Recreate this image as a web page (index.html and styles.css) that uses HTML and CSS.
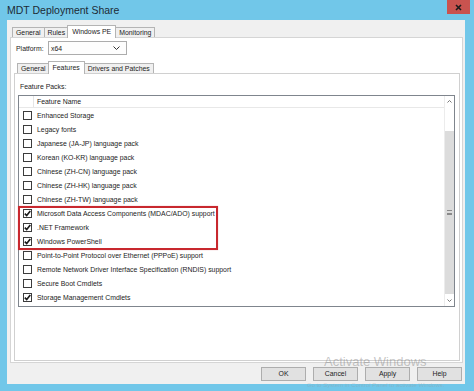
FILE: index.html
```html
<!DOCTYPE html>
<html>
<head>
<meta charset="utf-8">
<link rel="stylesheet" href="styles.css">
</head>
<body>
<div class="window">
  <div class="titlebar">
    <span class="title">MDT Deployment Share</span>
    <div class="close"><svg width="7" height="7" viewBox="0 0 7 7"><path d="M1 1L6 6M6 1L1 6" stroke="#1a1a1a" stroke-width="1.6"/></svg></div>
  </div>
  <div class="client">
    <div class="tabs outer-tabs">
      <div class="tab">General</div>
      <div class="tab">Rules</div>
      <div class="tab active">Windows PE</div>
      <div class="tab">Monitoring</div>
    </div>
    <div class="panel outer-panel">
      <div class="platform-row">
        <span class="platform-label">Platform:</span>
        <div class="select"><span>x64</span><svg width="7" height="4" viewBox="0 0 7 4"><path d="M0.5 0.5L3.5 3.5L6.5 0.5" fill="none" stroke="#333" stroke-width="1"/></svg></div>
      </div>
      <div class="tabs inner-tabs">
        <div class="tab">General</div>
        <div class="tab active">Features</div>
        <div class="tab">Drivers and Patches</div>
      </div>
      <div class="panel inner-panel">
        <div class="packs-label">Feature Packs:</div>
        <div class="listbox">
          <div class="list">
            <div class="list-header"><div class="hcol-check"></div><div class="hcol-name">Feature Name</div></div>
            <div class="row"><span class="cb"></span><span>Enhanced Storage</span></div>
            <div class="row"><span class="cb"></span><span>Legacy fonts</span></div>
            <div class="row"><span class="cb"></span><span>Japanese (JA-JP) language pack</span></div>
            <div class="row"><span class="cb"></span><span>Korean (KO-KR) language pack</span></div>
            <div class="row"><span class="cb"></span><span>Chinese (ZH-CN) language pack</span></div>
            <div class="row"><span class="cb"></span><span>Chinese (ZH-HK) language pack</span></div>
            <div class="row"><span class="cb"></span><span>Chinese (ZH-TW) language pack</span></div>
            <div class="row"><span class="cb"><svg width="7" height="7" viewBox="0 0 7 7"><path d="M0.8 3.6L2.7 5.6L6.3 1" fill="none" stroke="#1a1a1a" stroke-width="1.6"/></svg></span><span>Microsoft Data Access Components (MDAC/ADO) support</span></div>
            <div class="row"><span class="cb"><svg width="7" height="7" viewBox="0 0 7 7"><path d="M0.8 3.6L2.7 5.6L6.3 1" fill="none" stroke="#1a1a1a" stroke-width="1.6"/></svg></span><span>.NET Framework</span></div>
            <div class="row"><span class="cb"><svg width="7" height="7" viewBox="0 0 7 7"><path d="M0.8 3.6L2.7 5.6L6.3 1" fill="none" stroke="#1a1a1a" stroke-width="1.6"/></svg></span><span>Windows PowerShell</span></div>
            <div class="row"><span class="cb"></span><span>Point-to-Point Protocol over Ethernet (PPPoE) support</span></div>
            <div class="row"><span class="cb"></span><span>Remote Network Driver Interface Specification (RNDIS) support</span></div>
            <div class="row"><span class="cb"></span><span>Secure Boot Cmdlets</span></div>
            <div class="row"><span class="cb"><svg width="7" height="7" viewBox="0 0 7 7"><path d="M0.8 3.6L2.7 5.6L6.3 1" fill="none" stroke="#1a1a1a" stroke-width="1.6"/></svg></span><span>Storage Management Cmdlets</span></div>
          </div>
          <div class="scrollbar">
            <div class="sb-arrow"><svg width="5" height="3" viewBox="0 0 5 3"><path d="M0.5 2.5L2.5 0.5L4.5 2.5" fill="none" stroke="#777" stroke-width="1"/></svg></div>
            <div class="sb-track"></div>
            <div class="sb-thumb"><span class="grip"></span></div>
            <div class="sb-arrow down"><svg width="5" height="3" viewBox="0 0 5 3"><path d="M0.5 0.5L2.5 2.5L4.5 0.5" fill="none" stroke="#777" stroke-width="1"/></svg></div>
          </div>
          <div class="highlight"></div>
        </div>
      </div>
    </div>
    <div class="buttons">
      <div class="btn">OK</div>
      <div class="btn">Cancel</div>
      <div class="btn">Apply</div>
      <div class="btn">Help</div>
    </div>
    <div class="watermark">Activate Windows</div>
    <div class="watermark-sub">Go to System in Control Panel to activate Windows.</div>
  </div>
</div>
</body>
</html>
```
FILE: styles.css
```css
* { box-sizing: border-box; }
html, body { margin: 0; padding: 0; }
body {
  width: 474px;
  height: 391px;
  overflow: hidden;
  background: #71c7e9;
  font-family: "Liberation Sans", Arial, sans-serif;
  font-size: 6.9px;
  color: #1c1c1c;
}
.window {
  height: 391px;
  display: flex;
  flex-direction: column;
}
.titlebar {
  height: 20px;
  flex: none;
  display: flex;
  align-items: flex-start;
  padding-left: 7px;
}
.title {
  font-size: 10.5px;
  line-height: 20px;
  color: #1d2b36;
}
.close {
  margin-left: auto;
  margin-right: 4px;
  width: 23px;
  height: 14px;
  background: #c9534f;
  display: flex;
  align-items: center;
  justify-content: center;
}
.client {
  flex: 1;
  margin: 0 9px 7px 7px;
  background: #f0f0f0;
  padding: 5px 2px 0 3px;
  position: relative;
  display: flex;
  flex-direction: column;
}
.tabs {
  display: flex;
  align-items: flex-end;
  height: 13px;
  margin-bottom: -1px;
  position: relative;
  z-index: 1;
  flex: none;
}
.outer-tabs { padding-left: 2px; }
.tab {
  height: 10px;
  margin-bottom: 1px;
  padding: 0 3px;
  border: 1px solid #b4b4b4;
  border-bottom: none;
  background: #f0f0f0;
  line-height: 9px;
  margin-right: -1px;
  white-space: nowrap;
}
.tab.active {
  height: 13px;
  margin-bottom: 0;
  background: #fff;
  line-height: 11px;
  padding: 0 4px;
  margin-left: -1px;
  margin-right: -1px;
}
.panel {
  background: #fff;
  border: 1px solid #d5d5d5;
}
.outer-panel {
  height: 326px;
  flex: none;
  display: flex;
  flex-direction: column;
  padding: 3px 2px 0 3px;
}
.platform-row {
  display: flex;
  align-items: center;
  height: 14px;
  padding-left: 2px;
}
.platform-label {
  width: 32px;
}
.select {
  width: 79px;
  height: 14px;
  border: 1px solid #acacac;
  background: #fdfdfd;
  display: flex;
  align-items: center;
  justify-content: space-between;
  padding: 0 6px 0 2px;
}
.inner-tabs {
  margin-top: 6px;
  padding-left: 3px;
}
.inner-panel {
  height: 288px;
  display: flex;
  flex-direction: column;
  border-color: #d0d0d0;
}
.packs-label {
  margin: 8px 0 0 5px;
  height: 10px;
  line-height: 10px;
}
.listbox {
  position: relative;
  margin: 3px 0 0 3px;
  width: 437px;
  height: 212px;
  border: 1px solid #7f858d;
  display: flex;
}
.list {
  flex: 1;
}
.list-header {
  height: 12px;
  display: flex;
  border-bottom: 1px solid #e8e8e8;
}
.hcol-check {
  width: 15px;
  border-right: 1px solid #e5e5e5;
}
.hcol-name {
  padding-left: 3px;
  line-height: 11px;
}
.row {
  height: 14px;
  display: flex;
  align-items: center;
  padding-left: 4px;
  white-space: nowrap;
}
.cb {
  width: 9px;
  height: 9px;
  border: 1px solid #3c3c3c;
  background: #fff;
  margin-right: 5px;
  display: flex;
  align-items: center;
  justify-content: center;
  flex: none;
}
.scrollbar {
  width: 10px;
  display: flex;
  flex-direction: column;
  border-left: 1px solid #ececec;
  background: #fff;
}
.sb-arrow {
  height: 11px;
  display: flex;
  align-items: center;
  justify-content: center;
}
.sb-arrow.down { height: 12px; }
.sb-track { height: 24px; }
.sb-thumb {
  height: 163px;
  background: #dcdcdc;
  display: flex;
  align-items: center;
  justify-content: center;
}
.grip {
  width: 5px;
  height: 5px;
  border-top: 1px solid #8a8a8a;
  border-bottom: 1px solid #8a8a8a;
  background: linear-gradient(#dcdcdc 0 1px, #8a8a8a 1px 2px, #dcdcdc 2px);
  background-size: 5px 3px;
  background-position: 0 1px;
  background-repeat: no-repeat;
}
.highlight {
  position: absolute;
  left: -1px;
  top: 110px;
  width: 200px;
  height: 44px;
  border: 2px solid #c8282e;
  box-shadow: 0 0 1px rgba(200, 40, 46, 0.4);
}
.buttons {
  display: flex;
  justify-content: flex-end;
  gap: 7px;
  margin-top: 4px;
  padding-right: 1px;
}
.btn {
  width: 45px;
  height: 14px;
  border: 1px solid #adadad;
  background: #e1e1e1;
  text-align: center;
  line-height: 12px;
}
.watermark {
  position: absolute;
  left: 317px;
  top: 334px;
  font-size: 13px;
  line-height: 15px;
  color: rgba(130, 130, 130, 0.45);
  pointer-events: none;
  white-space: nowrap;
}
.watermark-sub {
  position: absolute;
  left: 300px;
  top: 362px;
  font-size: 6px;
  line-height: 7px;
  color: rgba(150, 150, 150, 0.35);
  pointer-events: none;
  white-space: nowrap;
}
```
